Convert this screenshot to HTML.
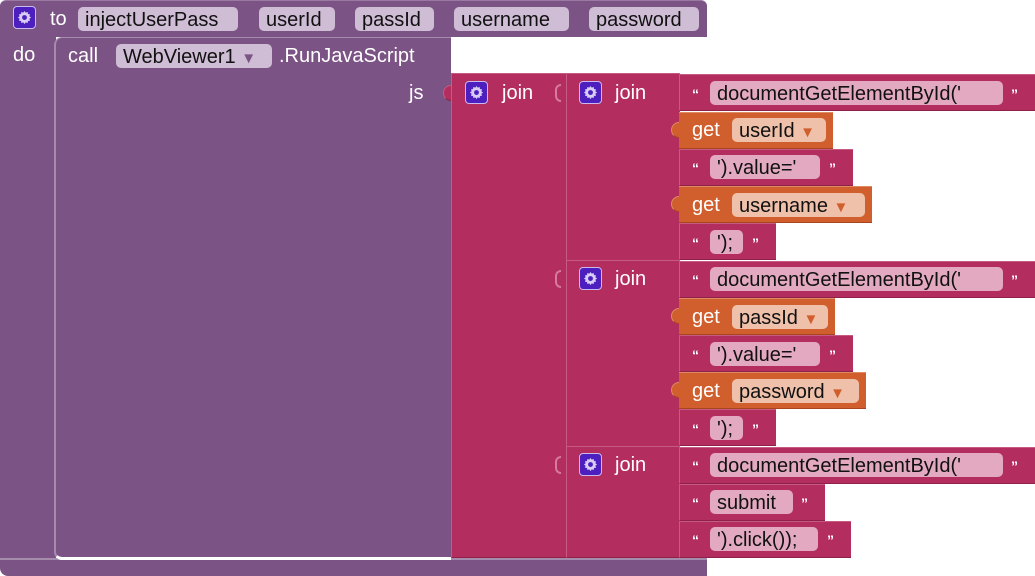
<!DOCTYPE html>
<html><head><meta charset="utf-8"><style>
*{margin:0;padding:0;box-sizing:border-box}
body{width:1035px;height:576px;background:#fff;position:relative;overflow:hidden;font-family:"Liberation Sans",sans-serif;font-size:20px}
.a{position:absolute}
.p{background:#7b5385}
.r{background:#b32d5e;border-top:1px solid #c65a82;border-left:1px solid #c65a82;border-bottom:1px solid #8e2049}
.o{background:#d05f2d;border-top:1px solid #df8a63;border-bottom:1px solid #a8451c}
.t{color:#fff;line-height:27px;white-space:nowrap}
.f{position:absolute;height:24px;border-radius:5px;color:#111;line-height:26px;padding-left:7px;white-space:nowrap}
.fp{background:#cfbcd5}
.fr{background:#e3a9c0}
.fo{background:#efc1aa}
.g{position:absolute;width:23px;height:23px;border-radius:4px;background:#4d1fbf;border:1px solid #c9b9ee;}
.g svg{position:absolute;left:3px;top:3px}
.q{position:absolute;color:#fff;font-size:14px;font-weight:bold;line-height:26px}
.tab{position:absolute;width:8px;height:16px;border-radius:8px 0 0 8px;}
.n{position:absolute;width:6px;height:18px;border:2px solid #d77a9c;border-right:none;border-radius:6px 0 0 6px}
</style></head><body>
<div class="a p" style="left:0;top:0;width:707px;height:37px;border-radius:6px 6px 0 0;border-top:1px solid #9a7aa3"></div>
<div class="a p" style="left:0;top:36px;width:56px;height:530px;border-radius:0 0 0 8px"></div>
<div class="a p" style="left:0;top:558px;width:707px;height:18px;border-radius:0 0 0 8px;border-top:2px solid #a58cac"></div>
<div class="g" style="left:13px;top:6px"><svg width="15" height="15" viewBox="0 0 16 16"><path d="M8 1l1.3 1.8 2.1-.7.3 2.2 2.2.3-.7 2.1L15 8l-1.8 1.3.7 2.1-2.2.3-.3 2.2-2.1-.7L8 15l-1.3-1.8-2.1.7-.3-2.2-2.2-.3.7-2.1L1 8l1.8-1.3-.7-2.1 2.2-.3.3-2.2 2.1.7z" fill="#d8cdf5"/><circle cx="8" cy="8" r="2.6" fill="#4d1fbf"/></svg></div>
<div class="a t" style="left:50px;top:6px">to</div>
<div class="f fp" style="left:78px;top:7px;width:160px">injectUserPass</div>
<div class="f fp" style="left:259px;top:7px;width:76px">userId</div>
<div class="f fp" style="left:355px;top:7px;width:79px">passId</div>
<div class="f fp" style="left:454px;top:7px;width:115px">username</div>
<div class="f fp" style="left:589px;top:7px;width:110px">password</div>
<div class="a t" style="left:13px;top:42px">do</div>
<div class="a p" style="left:54px;top:37px;width:397px;height:523px;border-radius:8px 0 0 8px;border-left:2px solid #a58cac;border-top:1px solid #a58cac;border-bottom:3px solid #fff"></div>
<div class="a t" style="left:68px;top:43px">call</div>
<div class="f fp" style="left:116px;top:44px;width:156px">WebViewer1 <span style="color:#7b5385;font-size:15px">▼</span></div>
<div class="a t" style="left:279px;top:43px">.RunJavaScript</div>
<div class="a t" style="left:409px;top:80px">js</div>
<div class="a r" style="left:451px;top:73px;width:116px;height:485px"></div>
<div class="tab r" style="left:443px;top:85px"></div>
<div class="a r" style="left:566px;top:73px;width:114px;height:188px"></div>
<div class="a r" style="left:566px;top:260px;width:114px;height:187px"></div>
<div class="a r" style="left:566px;top:446px;width:114px;height:112px"></div>
<div class="n" style="left:555px;top:84px"></div>
<div class="n" style="left:555px;top:270px"></div>
<div class="n" style="left:555px;top:456px"></div>

<div class="a r" style="left:679px;top:74px;width:356px;height:37px"></div>
<div class="a o" style="left:679px;top:112px;width:154px;height:37px"></div>
<div class="a r" style="left:679px;top:149px;width:174px;height:37px"></div>
<div class="a o" style="left:679px;top:186px;width:193px;height:37px"></div>
<div class="a r" style="left:679px;top:223px;width:97px;height:37px"></div>

<div class="a r" style="left:679px;top:261px;width:356px;height:37px"></div>
<div class="a o" style="left:679px;top:298px;width:156px;height:37px"></div>
<div class="a r" style="left:679px;top:335px;width:174px;height:37px"></div>
<div class="a o" style="left:679px;top:372px;width:187px;height:37px"></div>
<div class="a r" style="left:679px;top:409px;width:97px;height:37px"></div>

<div class="a r" style="left:679px;top:447px;width:356px;height:37px"></div>
<div class="a r" style="left:679px;top:484px;width:146px;height:37px"></div>
<div class="a r" style="left:679px;top:521px;width:172px;height:37px"></div>

<div class="tab o" style="left:671px;top:122px;border-left:1px solid #df8a63"></div>
<div class="tab o" style="left:671px;top:196px;border-left:1px solid #df8a63"></div>
<div class="tab o" style="left:671px;top:308px;border-left:1px solid #df8a63"></div>
<div class="tab o" style="left:671px;top:382px;border-left:1px solid #df8a63"></div>

<div class="g" style="left:465px;top:81px"><svg width="15" height="15" viewBox="0 0 16 16"><path d="M8 1l1.3 1.8 2.1-.7.3 2.2 2.2.3-.7 2.1L15 8l-1.8 1.3.7 2.1-2.2.3-.3 2.2-2.1-.7L8 15l-1.3-1.8-2.1.7-.3-2.2-2.2-.3.7-2.1L1 8l1.8-1.3-.7-2.1 2.2-.3.3-2.2 2.1.7z" fill="#d8cdf5"/><circle cx="8" cy="8" r="2.6" fill="#4d1fbf"/></svg></div>
<div class="a t" style="left:502px;top:80px">join</div>
<div class="g" style="left:579px;top:81px"><svg width="15" height="15" viewBox="0 0 16 16"><path d="M8 1l1.3 1.8 2.1-.7.3 2.2 2.2.3-.7 2.1L15 8l-1.8 1.3.7 2.1-2.2.3-.3 2.2-2.1-.7L8 15l-1.3-1.8-2.1.7-.3-2.2-2.2-.3.7-2.1L1 8l1.8-1.3-.7-2.1 2.2-.3.3-2.2 2.1.7z" fill="#d8cdf5"/><circle cx="8" cy="8" r="2.6" fill="#4d1fbf"/></svg></div>
<div class="a t" style="left:615px;top:80px">join</div>
<div class="g" style="left:579px;top:267px"><svg width="15" height="15" viewBox="0 0 16 16"><path d="M8 1l1.3 1.8 2.1-.7.3 2.2 2.2.3-.7 2.1L15 8l-1.8 1.3.7 2.1-2.2.3-.3 2.2-2.1-.7L8 15l-1.3-1.8-2.1.7-.3-2.2-2.2-.3.7-2.1L1 8l1.8-1.3-.7-2.1 2.2-.3.3-2.2 2.1.7z" fill="#d8cdf5"/><circle cx="8" cy="8" r="2.6" fill="#4d1fbf"/></svg></div>
<div class="a t" style="left:615px;top:266px">join</div>
<div class="g" style="left:579px;top:453px"><svg width="15" height="15" viewBox="0 0 16 16"><path d="M8 1l1.3 1.8 2.1-.7.3 2.2 2.2.3-.7 2.1L15 8l-1.8 1.3.7 2.1-2.2.3-.3 2.2-2.1-.7L8 15l-1.3-1.8-2.1.7-.3-2.2-2.2-.3.7-2.1L1 8l1.8-1.3-.7-2.1 2.2-.3.3-2.2 2.1.7z" fill="#d8cdf5"/><circle cx="8" cy="8" r="2.6" fill="#4d1fbf"/></svg></div>
<div class="a t" style="left:615px;top:452px">join</div>

<div class="q" style="left:692px;top:81px">“</div><div class="f fr" style="left:710px;top:81px;width:293px">documentGetElementById('</div><div class="q" style="left:1011px;top:81px">”</div>
<div class="a t" style="left:692px;top:117px">get</div><div class="f fo" style="left:732px;top:118px;width:94px">userId <span style="color:#d05f2d;font-size:15px">▼</span></div>
<div class="q" style="left:692px;top:155px">“</div><div class="f fr" style="left:710px;top:155px;width:110px">').value='</div><div class="q" style="left:829px;top:155px">”</div>
<div class="a t" style="left:692px;top:192px">get</div><div class="f fo" style="left:732px;top:193px;width:133px">username <span style="color:#d05f2d;font-size:15px">▼</span></div>
<div class="q" style="left:692px;top:230px">“</div><div class="f fr" style="left:710px;top:230px;width:33px">');</div><div class="q" style="left:752px;top:230px">”</div>
<div class="q" style="left:692px;top:267px">“</div><div class="f fr" style="left:710px;top:267px;width:293px">documentGetElementById('</div><div class="q" style="left:1011px;top:267px">”</div>
<div class="a t" style="left:692px;top:304px">get</div><div class="f fo" style="left:732px;top:305px;width:96px">passId <span style="color:#d05f2d;font-size:15px">▼</span></div>
<div class="q" style="left:692px;top:342px">“</div><div class="f fr" style="left:710px;top:342px;width:110px">').value='</div><div class="q" style="left:829px;top:342px">”</div>
<div class="a t" style="left:692px;top:378px">get</div><div class="f fo" style="left:732px;top:379px;width:127px">password <span style="color:#d05f2d;font-size:15px">▼</span></div>
<div class="q" style="left:692px;top:416px">“</div><div class="f fr" style="left:710px;top:416px;width:33px">');</div><div class="q" style="left:752px;top:416px">”</div>
<div class="q" style="left:692px;top:453px">“</div><div class="f fr" style="left:710px;top:453px;width:293px">documentGetElementById('</div><div class="q" style="left:1011px;top:453px">”</div>
<div class="q" style="left:692px;top:490px">“</div><div class="f fr" style="left:710px;top:490px;width:83px">submit</div><div class="q" style="left:801px;top:490px">”</div>
<div class="q" style="left:692px;top:527px">“</div><div class="f fr" style="left:710px;top:527px;width:108px">').click());</div><div class="q" style="left:827px;top:527px">”</div>
</body></html>
